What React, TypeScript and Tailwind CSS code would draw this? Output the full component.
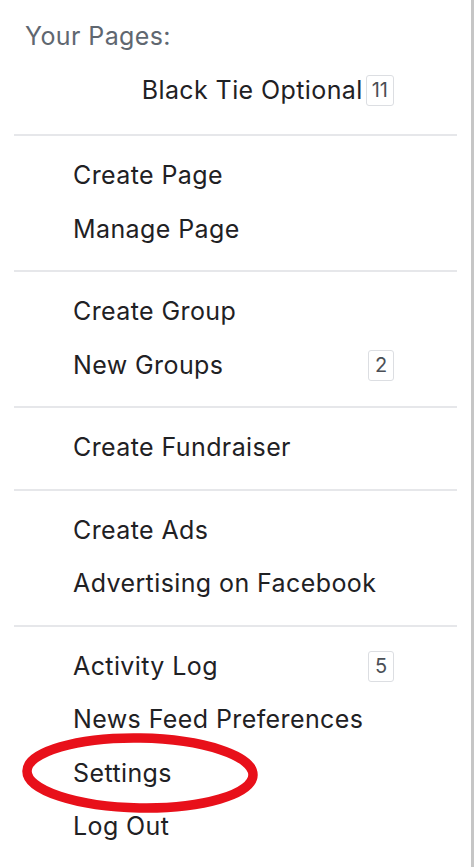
import React from 'react';

type Item = { label: string; badge?: string };

const sections: Item[][] = [
  [{ label: 'Create Page' }, { label: 'Manage Page' }],
  [{ label: 'Create Group' }, { label: 'New Groups', badge: '2' }],
  [{ label: 'Create Fundraiser' }],
  [{ label: 'Create Ads' }, { label: 'Advertising on Facebook' }],
  [
    { label: 'Activity Log', badge: '5' },
    { label: 'News Feed Preferences' },
    { label: 'Settings' },
    { label: 'Log Out' },
  ],
];

const Badge: React.FC<{ value: string }> = ({ value }) => (
  <span className="flex h-[31px] min-w-[26px] items-center justify-center rounded-[3px] border border-[#dcdee2] bg-white px-[5px] text-[20px] leading-none tracking-normal text-[#4b4f56]">
    {value}
  </span>
);

const Divider = () => <div className="mx-[14px] h-[2px] bg-[#e6e7ea]" />;

const App: React.FC = () => {
  return (
    <div className="relative h-[867px] w-[474px] overflow-hidden border-r-[3px] border-[#c6c6c6] bg-white font-['Inter','Liberation_Sans',sans-serif] text-[25px] tracking-[0.4px] text-[#1f2124]">
      <div className="pt-[10px] pb-[17px]">
        <div className="flex h-[53.5px] items-center pl-[25px] text-[#606770]">Your Pages:</div>
        <div className="flex h-[53.5px] items-center justify-end gap-[3px] pr-[77px]">
          <span>Black Tie Optional</span>
          <Badge value="11" />
        </div>
      </div>

      {sections.map((items, i) => (
        <div key={i}>
          <Divider />
          <div className="pt-[13px] pb-[14px]">
            {items.map((item) => (
              <div
                key={item.label}
                className="flex h-[53.5px] items-center justify-between pl-[73px] pr-[77px]"
              >
                <span>{item.label}</span>
                {item.badge && <Badge value={item.badge} />}
              </div>
            ))}
          </div>
        </div>
      ))}

      {/* red circle drawn over Settings */}
      <svg
        className="pointer-events-none absolute left-[18px] top-[728px]"
        width="250"
        height="90"
        viewBox="0 0 250 90"
      >
        <ellipse
          cx="122"
          cy="45"
          rx="113"
          ry="35"
          fill="none"
          stroke="#e8101a"
          strokeWidth="9.5"
          transform="rotate(1 122 45)"
        />
      </svg>
    </div>
  );
};

export default App;
